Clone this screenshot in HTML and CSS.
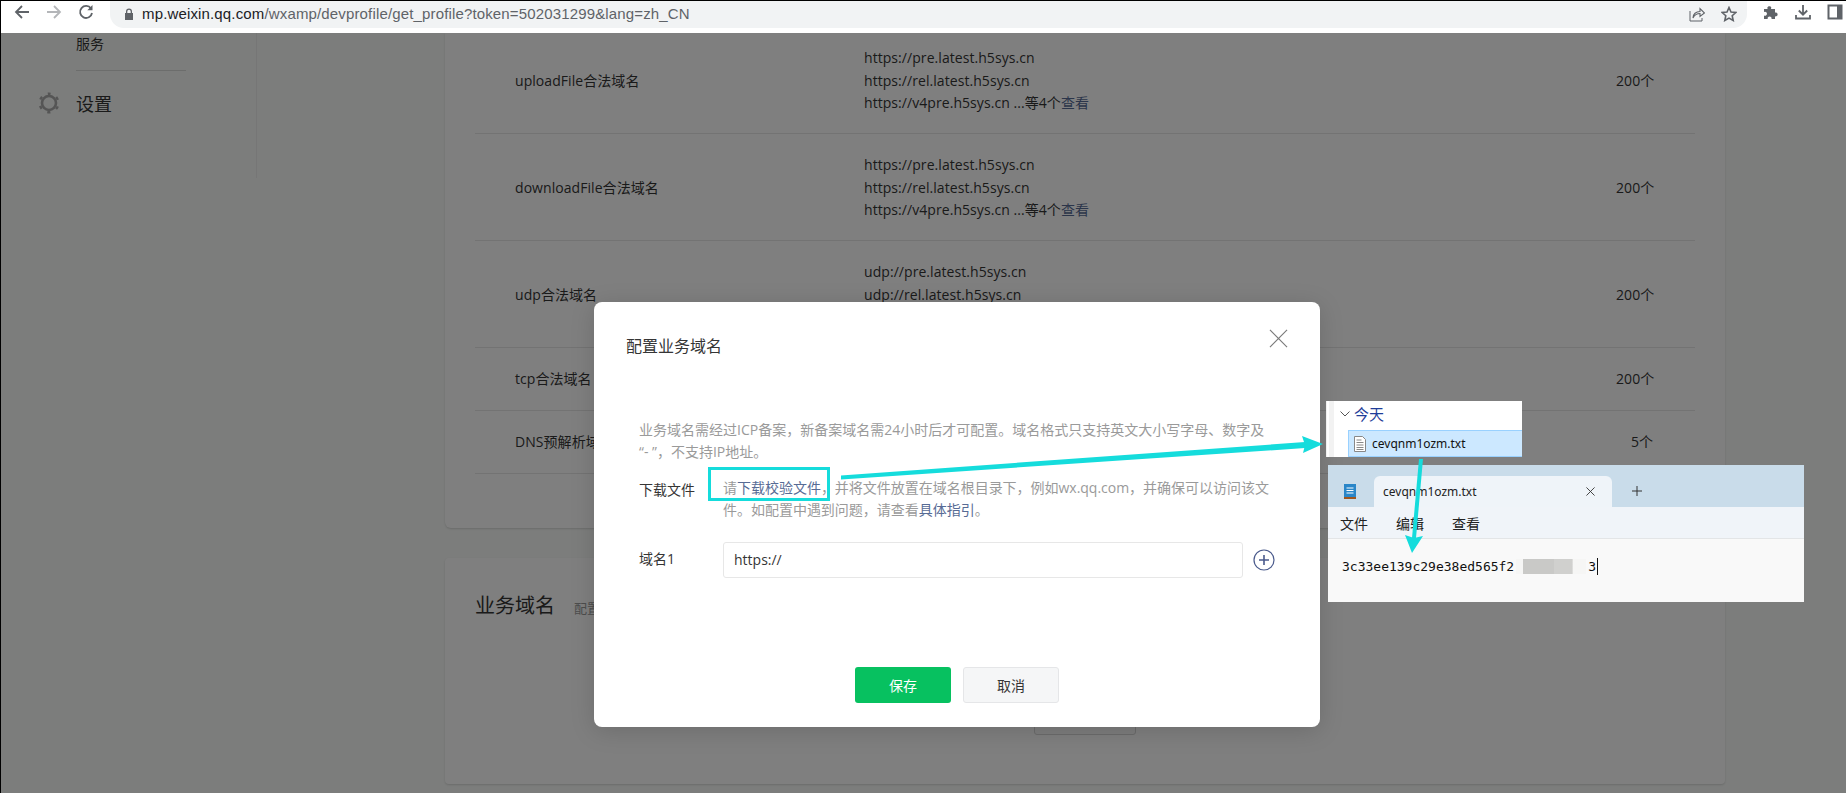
FILE: index.html
```html
<!DOCTYPE html>
<html lang="zh-CN">
<head>
<meta charset="utf-8">
<title>配置业务域名</title>
<link rel="stylesheet" href="styles.css">
</head>
<body>
<div class="toolbar">
  <div class="nav-icons">
    <svg class="ti" viewBox="0 0 16 16"><path d="M15 8H2M8 2L2 8l6 6" fill="none" stroke="#5f6368" stroke-width="1.8"/></svg>
    <svg class="ti" viewBox="0 0 16 16"><path d="M1 8h13M8 2l6 6-6 6" fill="none" stroke="#b4b6b9" stroke-width="1.8"/></svg>
    <svg class="ti" viewBox="0 0 16 16"><path d="M13 4.500A6 6 0 1 0 14 9" fill="none" stroke="#5f6368" stroke-width="1.8"/><path d="M14.500 1v5.200H9.300z" fill="#5f6368"/></svg>
  </div>
  <div class="omnibox">
    <svg class="lock" viewBox="0 0 10 12"><path d="M2 5V3.500a3 3 0 0 1 6 0V5h1v7H1V5zm1.300 0h3.400V3.500a1.700 1.700 0 0 0-3.400 0z" fill="#5f6368"/></svg>
    <span class="url"><span class="host">mp.weixin.qq.com</span>/wxamp/devprofile/get_profile?token=502031299&amp;lang=zh_CN</span>
    <svg class="oi" viewBox="0 0 16 16"><path d="M1 5v10h12v-3" fill="none" stroke="#5f6368" stroke-width="1"/><path d="M4 12c0-4 3-6.500 7-6.500V2.500L15.500 7 11 10.500v-3C8 7.500 5.500 9 4 12z" fill="none" stroke="#5f6368" stroke-width="1.100"/></svg>
    <svg class="oi oi-star" viewBox="0 0 16 16"><path d="M8 1.500l2 4.500 4.800.5-3.600 3.200 1 4.800L8 12.100 3.800 14.500l1-4.800L1.200 6.500 6 6z" fill="none" stroke="#5f6368" stroke-width="1.600"/></svg>
  </div>
  <div class="ext-icons">
    <svg class="ti" viewBox="0 0 16 16"><path d="M1 5h3.500a2 2 0 0 1 3.800-1.500L8 5h4v3.500a2 2 0 1 1 0 3.800V15H8.500a2 2 0 1 0-3.800 0H1v-3.500a2 2 0 1 0 0-3.500z" fill="#5f6368"/></svg>
    <svg class="ti" viewBox="0 0 16 16"><path d="M8 1v9M3.800 6.500L8 10.700l4.200-4.200M1 11v3.500h14V11" fill="none" stroke="#5f6368" stroke-width="1.800"/></svg>
    <svg class="ti" viewBox="0 0 16 16"><path d="M1.500 1.500h13v13h-13z" fill="#fff" stroke="#5f6368" stroke-width="2"/><path d="M10 1.500h4.500v13H10z" fill="#5f6368"/></svg>
  </div>
</div>

<div class="viewport">
  <div class="page">
    <aside class="sidebar">
      <div class="side-sub">服务</div>
      <div class="side-main">
        <svg class="gear" viewBox="0 0 22 22"><circle cx="11" cy="11" r="7" fill="none" stroke="#aaa" stroke-width="2.600"/><circle cx="11" cy="11" r="9.300" fill="none" stroke="#aaa" stroke-width="2.400" stroke-dasharray="3.200 6.540" stroke-dashoffset="1.600" transform="rotate(-90 11 11)"/></svg>
        <span>设置</span>
      </div>
    </aside>
    <main class="main">
      <section class="card card-a">
        <div class="row row-first">
          <div>uploadFile合法域名</div>
          <div>https://pre.latest.h5sys.cn<br>https://rel.latest.h5sys.cn<br>https://v4pre.h5sys.cn ...等4个<a class="link">查看</a></div>
          <div class="quota">200个</div>
        </div>
        <div class="row">
          <div>downloadFile合法域名</div>
          <div>https://pre.latest.h5sys.cn<br>https://rel.latest.h5sys.cn<br>https://v4pre.h5sys.cn ...等4个<a class="link">查看</a></div>
          <div class="quota">200个</div>
        </div>
        <div class="row">
          <div>udp合法域名</div>
          <div>udp://pre.latest.h5sys.cn<br>udp://rel.latest.h5sys.cn<br>udp://v4pre.h5sys.cn</div>
          <div class="quota">200个</div>
        </div>
        <div class="row row-short">
          <div>tcp合法域名</div>
          <div></div>
          <div class="quota">200个</div>
        </div>
        <div class="row row-short">
          <div>DNS预解析域名</div>
          <div></div>
          <div class="quota">5个</div>
        </div>
      </section>
      <section class="card card-b">
        <div class="card-head"><h2>业务域名</h2><span>配置小程序业务域名</span></div>
        <button class="ghost">开始配置</button>
      </section>
    </main>
  </div>

  <div class="overlay"></div>

  <div class="modal">
    <h3 class="modal-title">配置业务域名</h3>
    <svg class="close" viewBox="0 0 20 20"><path d="M1 1l18 18M19 1L1 19" fill="none" stroke="#7a7a7a" stroke-width="1.200"/></svg>
    <div class="modal-body">
      <p class="note">业务域名需经过ICP备案，新备案域名需24小时后才可配置。域名格式只支持英文大小写字母、数字及<span class="nowrap">“- ”，</span>不支持IP地址。</p>
      <div class="field field-file">
        <div class="label">下载文件</div>
        <div class="file-text">请<a class="link">下载校验文件</a>，并将文件放置在域名根目录下，例如wx.qq.com，并确保可以访问该文件。如配置中遇到问题，请查看<a class="link">具体指引</a>。</div>
      </div>
      <div class="field field-domain">
        <div class="label">域名1</div>
        <div class="input">https://</div>
        <svg class="plus" viewBox="0 0 22 22"><circle cx="11" cy="11" r="10" fill="none" stroke="#4a5a8c" stroke-width="1.200"/><path d="M11 6v10M6 11h10" stroke="#4a5a8c" stroke-width="1.600"/></svg>
      </div>
    </div>
    <div class="actions">
      <button class="btn btn-primary">保存</button>
      <button class="btn btn-default">取消</button>
    </div>
  </div>

  <div class="explorer">
    <div class="ex-rail"></div>
    <div class="ex-list">
      <div class="ex-group"><svg class="chev" viewBox="0 0 10 6"><path d="M.5.500L5 5 9.500.500" fill="none" stroke="#555" stroke-width="1"/></svg>今天</div>
      <div class="ex-file">
        <svg class="txt-icon" viewBox="0 0 12 16"><path d="M.5.500h8l3 3v12H.5z" fill="#fff" stroke="#888"/><path d="M2.500 4h5M2.500 6.500h7M2.500 9h7M2.500 11.500h7M2.500 13.500h7" stroke="#888"/></svg>
        cevqnm1ozm.txt
      </div>
    </div>
  </div>

  <div class="notepad">
    <div class="np-tabs">
      <svg class="np-icon" viewBox="0 0 12 16"><rect y="1" width="12" height="14" fill="#2a86c8"/><rect y="14" width="12" height="2" fill="#a0561e"/><path d="M2.500 5h7M2.500 7.500h7M2.500 10h7" stroke="#fff"/></svg>
      <div class="np-tab">
        <span>cevqnm1ozm.txt</span>
        <svg class="np-x" viewBox="0 0 10 10"><path d="M.5.500l9 9M9.500.500l-9 9" stroke="#333" stroke-width="1"/></svg>
      </div>
      <svg class="np-plus" viewBox="0 0 10 10"><path d="M5 0v10M0 5h10" stroke="#333" stroke-width="1"/></svg>
    </div>
    <div class="np-menu"><span>文件</span><span>编辑</span><span>查看</span></div>
    <div class="np-text">
      <span>3c33ee139c29e38ed565f2</span><i class="blur"></i><span class="np-last">3</span><i class="caret"></i>
    </div>
  </div>

  <div class="teal-box"></div>
  <svg class="arrows" viewBox="0 0 1846 760">
    <path d="M841 442.500L1305 409L1305 415L841 446.500z" fill="#15dcdc"/>
    <path d="M1323 411L1302 403L1305 412L1303 420z" fill="#15dcdc"/>
    <path d="M1419 426L1423 426L1416 505L1412 505z" fill="#15dcdc"/>
    <path d="M1412 520L1405 502L1414 505L1423 503z" fill="#15dcdc"/>
  </svg>
</div>
</body>
</html>
```
FILE: styles.css
```css
* { box-sizing: border-box; }
html, body { margin: 0; padding: 0; height: 100%; overflow: hidden; }
body {
  width: 1846px;
  height: 793px;
  background: #fff;
  font-family: "Open Sans", "Noto Sans CJK SC", sans-serif;
  font-size: 14px;
  color: #353535;
}
body::after { content: ""; position: absolute; left: 0; top: 0; width: 1px; height: 793px; background: #000; }
h2, h3, p { margin: 0; font-weight: 400; }

/* browser chrome */
.toolbar {
  height: 33px;
  border-top: 1px solid #000;
  display: flex;
  align-items: flex-start;
  padding-bottom: 4px;
  background: #fff;
}
.ti { width: 16px; height: 16px; display: block; flex: none; }
.nav-icons { width: 110px; display: flex; gap: 16px; padding: 3px 0 0 14px; }
.omnibox {
  width: 1637px;
  height: 27px;
  background: #f1f3f4;
  border-radius: 0 0 14px 14px;
  display: flex;
  align-items: center;
  padding: 0 10px 2px 14px;
}
.lock { width: 10px; height: 12px; flex: none; }
.url { margin-left: 8px; font-family: "Liberation Sans", sans-serif; font-size: 15px; color: #5f6368; flex: 1; letter-spacing: 0.15px; }
.host { color: #202124; }
.oi { width: 16px; height: 16px; flex: none; }
.oi-star { margin-left: 16px; }
.ext-icons { display: flex; gap: 16px; padding: 3px 0 0 16px; }

/* page */
.viewport { position: relative; height: 760px; overflow: hidden; }
.page { display: flex; align-items: flex-start; height: 760px; background: #f8faf8; }
.sidebar { width: 257px; height: 145px; border-right: 1px solid #ececec; flex: none; padding: 1px 0 0 76px; }
.side-sub { height: 37px; line-height: 20px; width: 110px; border-bottom: 1px solid #d9dad9; }
.side-main { display: flex; align-items: center; height: 24px; margin: 20px 0 0 -38px; font-size: 18px; gap: 16px; }
.gear { width: 22px; height: 22px; flex: none; }
.main { padding-left: 188px; width: 1469px; flex: none; }
.card { width: 1280px; background: #fff; border-radius: 4px; padding: 0 30px; box-shadow: 0 1px 2px rgba(0, 0, 0, 0.14); }
.card-a { height: 495px; border-radius: 0 0 6px 6px; }
.row {
  display: grid;
  grid-template-columns: 349px 752px 1fr;
  align-items: center;
  height: 107px;
  padding: 2px 30px 0 40px;
  border-bottom: 1px solid #e7e7e7;
  line-height: 22.400px;
  letter-spacing: 0.06px;
}
.row-first { height: 101px; padding-top: 0; padding-bottom: 4px; }
.row-short { height: 63px; padding-top: 0; }
.quota { text-align: right; padding-right: 12px; white-space: nowrap; }
.link { color: #576b95; }
.card-b { margin-top: 30px; height: 226px; padding-top: 34px; display: flex; flex-direction: column; }
.card-head { display: flex; align-items: baseline; gap: 19px; height: 28px; line-height: 28px; }
.card-head h2 { font-size: 20px; }
.card-head span { font-size: 13px; color: #9a9a9a; }
.ghost {
  width: 102px;
  height: 36px;
  margin: 79px 0 0 559px;
  background: #fafafa;
  border: 1px solid #d6d6d6;
  border-radius: 3px;
  font: inherit;
}

.overlay { position: absolute; inset: 0; background: rgba(0, 0, 0, 0.5); }

/* dialog */
.modal {
  position: absolute;
  left: 594px;
  top: 269px;
  width: 726px;
  height: 425px;
  background: #fff;
  border-radius: 8px;
  box-shadow: 0 4px 24px rgba(0, 0, 0, 0.15);
  padding: 32px 0 0 32px;
}
.modal-title { font-size: 16px; line-height: 24px; }
.close { position: absolute; top: 27px; right: 32px; width: 19px; height: 19px; }
.modal-body { margin: 61px 0 0 13px; width: 637px; line-height: 22.400px; }
.note { color: #9a9a9a; }
.nowrap { white-space: nowrap; }
.field { display: grid; grid-template-columns: 84px 1fr; }
.field-file { margin-top: 13px; }
.field-file .label { padding-top: 2px; }
.file-text { color: #9a9a9a; letter-spacing: -0.02px; }
.field-domain { margin-top: 20px; grid-template-columns: 84px 520px 22px; align-items: center; width: 640px; }
.input {
  height: 36px;
  line-height: 34px;
  border: 1px solid #e7e7e7;
  border-radius: 3px;
  padding: 0 10px;
}
.plus { width: 22px; height: 22px; margin-left: 10px; }
.actions { display: flex; justify-content: center; gap: 12px; margin: 89px 32px 0 0; }
.btn { width: 96px; height: 36px; border-radius: 3px; font: inherit; padding: 0; }
.btn-primary { background: #07c160; color: #fff; border: 0; }
.btn-default { background: #f5f6f7; color: #353535; border: 1px solid #e5e6e8; }

/* pasted insets */
.explorer {
  position: absolute;
  left: 1326px;
  top: 368px;
  width: 196px;
  height: 56px;
  background: #fff;
  display: flex;
  font-family: "Noto Sans", "Noto Sans CJK SC", sans-serif;
}
.ex-rail { width: 8px; border-left: 1px solid #f0f0f0; border-right: 5px solid #f2f2f2; }
.ex-list { flex: 1; padding-left: 14px; }
.ex-group { height: 29px; padding-bottom: 4px; display: flex; align-items: center; color: #1f3d99; font-size: 15px; margin-left: -8px; }
.chev { width: 10px; height: 6px; margin-right: 4px; }
.ex-file {
  height: 27px;
  background: #cce8ff;
  border: 1px solid #99d1ff;
  border-right: 0;
  display: flex;
  align-items: center;
  gap: 6px;
  padding-left: 5px;
  font-size: 12px;
  color: #111;
}
.txt-icon { width: 12px; height: 16px; flex: none; }

.notepad {
  position: absolute;
  left: 1328px;
  top: 432px;
  width: 476px;
  height: 137px;
  background: #f9f9f9;
  font-family: "Noto Sans", "Noto Sans CJK SC", sans-serif;
}
.np-tabs { height: 42px; background: #c9dcea; display: flex; align-items: flex-end; }
.np-icon { width: 12px; height: 16px; margin: 0 0 8px 16px; flex: none; }
.np-tab {
  width: 238px;
  height: 31px;
  margin-left: 18px;
  background: #eff4f9;
  border-radius: 6px 6px 0 0;
  display: flex;
  align-items: center;
  justify-content: space-between;
  padding: 0 17px 0 9px;
  font-size: 12px;
  color: #222;
}
.np-x { width: 9px; height: 9px; }
.np-plus { width: 10px; height: 10px; margin: 0 0 11px 20px; }
.np-menu {
  height: 32px;
  background: #f0f4f9;
  border-bottom: 1px solid #e3e5e7;
  display: flex;
  align-items: center;
  gap: 28px;
  padding-left: 12px;
  font-size: 14px;
  color: #222;
}
.np-text { display: flex; align-items: center; padding: 18px 0 0 14px; font-family: "DejaVu Sans Mono", monospace; font-size: 13px; color: #111; height: 36px; }
.blur {
  width: 70px;
  height: 15px;
  margin-left: 2px;
  background: linear-gradient(90deg, #f6f6f5 0, #f6f6f5 10%, #c9c9c7 10%, #c9c9c7 55%, #d0d0ce 55%, #d0d0ce 80%, #f6f6f5 82%, #f6f6f5 100%);
  flex: none;
}
.np-last { margin-left: 2px; }
.caret { width: 1px; height: 17px; background: #111; margin-left: 1px; }

.teal-box { position: absolute; left: 708px; top: 434px; width: 122px; height: 34px; border: 3px solid #15dcdc; }
.arrows { position: absolute; left: 0; top: 0; width: 1846px; height: 760px; pointer-events: none; }
```
